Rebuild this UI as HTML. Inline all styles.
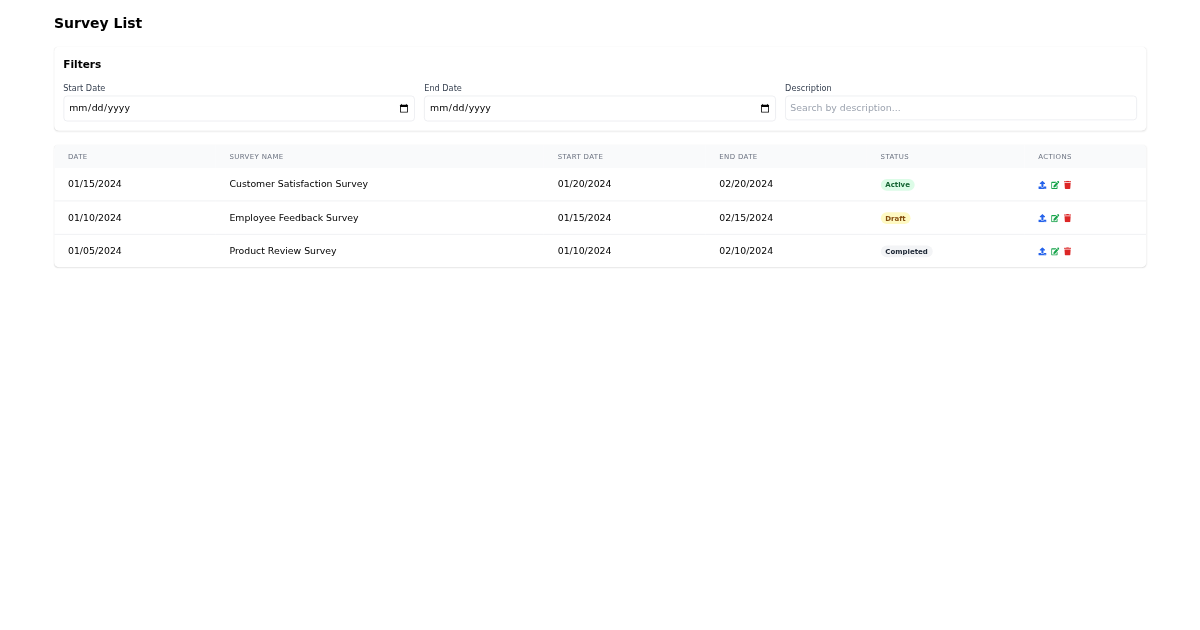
<!DOCTYPE html>
<html lang="en">
<head>
<meta charset="utf-8">
<title>Survey List</title>
<style>
*,*::before,*::after{box-sizing:border-box;margin:0;padding:0;border:0 solid #e5e7eb}
html,body{width:1200px;height:630px;overflow:hidden;background:#fff}
body{font-family:"DejaVu Sans","Liberation Sans",sans-serif;font-size:16px;line-height:24px;color:#000;-webkit-text-size-adjust:100%}
#layer{position:absolute;left:0;top:0;width:1200px;height:630px;will-change:transform}
#stage{position:absolute;left:0;top:0;width:2057.143px;height:1080px;transform:scale(0.5833333);transform-origin:0 0}
.wrap{padding:24px 92.57px 0 92.57px}
h1{font-size:24px;line-height:32px;font-weight:700;margin-bottom:24px}
.card{background:#fff;border-radius:8px;box-shadow:0 1px 3px 0 rgba(0,0,0,.07),0 1px 2px -1px rgba(0,0,0,.07)}
.filters{padding:16px;margin-bottom:24px}
h2{font-size:18px;line-height:28px;font-weight:700;margin-bottom:16px}
.grid{display:grid;grid-template-columns:repeat(3,minmax(0,1fr));gap:16px}
label{display:block;font-size:14px;line-height:20px;color:#374151;margin-bottom:4px;position:relative;top:1px}
.inp{position:relative;width:100%;border:1px solid #e1e4e8;border-radius:6px;white-space:nowrap}
.date{height:44px;padding:9px 8px}
.date span{padding:0 1px}
.date svg{position:absolute;right:11px;top:13px;width:14px;height:15px;transform:scale(1.08);transform-origin:5% 45%}
.text{height:42px;padding:8px;color:#9ca3af}
.tablecard{overflow:hidden}
table{width:100%;border-collapse:collapse;table-layout:fixed;text-indent:0}
thead{background:#f9fafb}
th{padding:12px 24px;text-align:left;font-size:12px;line-height:16px;font-weight:400;color:#6b7280;text-transform:uppercase;letter-spacing:.05em}
td{padding:16px 24px;white-space:nowrap}
tbody tr+tr{border-top:1px solid #e5e7eb}
.badge{display:inline-flex;padding:0 8px;font-size:12px;line-height:20px;font-weight:700;border-radius:9999px}
.g{background:#dcfce7;color:#166534}
.y{background:#fef9c3;color:#854d0e}
.n{background:#f3f4f6;color:#1f2937}
.acts{font-size:14px;line-height:20px}
.acts svg{display:inline-block;height:14px;vertical-align:-1.75px;margin-right:8px;fill:currentColor;position:relative;top:1.4px}
</style>
</head>
<body>
<div id="layer"><div id="stage">
<div class="wrap">
  <h1>Survey List</h1>

  <div class="card filters">
    <h2>Filters</h2>
    <div class="grid">
      <div>
        <label>Start Date</label>
        <div class="inp date"><span>mm</span>/<span>dd</span>/<span>yyyy</span><svg viewBox="0 0 14 15"><rect x="0.75" y="1.875" width="12.5" height="12.375" rx="0.9" fill="#000"/><rect x="2" y="5.5" width="10" height="7.625" fill="#fff"/><rect x="2.6" y="0.6" width="1.25" height="1.6" fill="#000"/><rect x="10.1" y="0.6" width="1.25" height="1.6" fill="#000"/></svg></div>
      </div>
      <div>
        <label>End Date</label>
        <div class="inp date"><span>mm</span>/<span>dd</span>/<span>yyyy</span><svg viewBox="0 0 14 15"><rect x="0.75" y="1.875" width="12.5" height="12.375" rx="0.9" fill="#000"/><rect x="2" y="5.5" width="10" height="7.625" fill="#fff"/><rect x="2.6" y="0.6" width="1.25" height="1.6" fill="#000"/><rect x="10.1" y="0.6" width="1.25" height="1.6" fill="#000"/></svg></div>
      </div>
      <div>
        <label>Description</label>
        <div class="inp text">Search by description...</div>
      </div>
    </div>
  </div>

  <div class="card tablecard">
    <table>
      <colgroup><col style="width:276.8px"><col style="width:562.7px"><col style="width:277px"><col style="width:276.6px"><col style="width:270.2px"><col></colgroup>
      <thead>
        <tr><th>Date</th><th>Survey Name</th><th>Start Date</th><th>End Date</th><th>Status</th><th>Actions</th></tr>
      </thead>
      <tbody>
        <tr>
          <td>01/15/2024</td><td>Customer Satisfaction Survey</td><td>01/20/2024</td><td>02/20/2024</td>
          <td><span class="badge g">Active</span></td>
          <td class="acts"><svg viewBox="0 0 512 512" width="14" style="color:#2563eb"><path d="M296 384h-80c-13.300 0-24-10.700-24-24V192h-87.700c-17.800 0-26.700-21.500-14.100-34.100L242.300 5.700c7.500-7.500 19.800-7.500 27.300 0l152.200 152.200c12.600 12.600 3.700 34.100-14.100 34.100H320v168c0 13.300-10.700 24-24 24zm216-8v112c0 13.300-10.700 24-24 24H24c-13.300 0-24-10.700-24-24V376c0-13.300 10.700-24 24-24h136v8c0 30.900 25.100 56 56 56h80c30.900 0 56-25.100 56-56v-8h136c13.300 0 24 10.700 24 24zm-124 88c0-11-9-20-20-20s-20 9-20 20 9 20 20 20 20-9 20-20zm64 0c0-11-9-20-20-20s-20 9-20 20 9 20 20 20 20-9 20-20z"/></svg><svg viewBox="0 0 576 512" width="14" preserveAspectRatio="none" style="color:#16a34a"><path d="M402.600 83.200l90.200 90.200c3.800 3.800 3.800 10 0 13.800L274.400 405.600l-92.800 10.300c-12.400 1.400-22.900-9.100-21.500-21.500l10.300-92.800L388.800 83.200c3.800-3.800 10-3.800 13.800 0zm162-22.900l-48.800-48.800c-15.200-15.200-39.900-15.200-55.200 0l-35.400 35.400c-3.800 3.800-3.800 10 0 13.800l90.200 90.200c3.800 3.800 10 3.800 13.800 0l35.400-35.400c15.200-15.300 15.200-40 0-55.200zM384 346.200V448H64V128h229.800c3.200 0 6.200-1.300 8.500-3.500l40-40c7.600-7.600 2.200-20.500-8.500-20.500H48C21.500 64 0 85.500 0 112v352c0 26.500 21.500 48 48 48h352c26.500 0 48-21.500 48-48V306.200c0-10.700-12.900-16-20.500-8.500l-40 40c-2.200 2.300-3.500 5.300-3.500 8.500z"/></svg><svg viewBox="0 0 448 512" width="12.25" style="color:#dc2626"><path d="M432 32H312l-9.400-18.700A24 24 0 0 0 281.100 0H166.800a23.720 23.720 0 0 0-21.400 13.300L136 32H16A16 16 0 0 0 0 48v32a16 16 0 0 0 16 16h416a16 16 0 0 0 16-16V48a16 16 0 0 0-16-16zM53.200 467a48 48 0 0 0 47.900 45h245.800a48 48 0 0 0 47.900-45L416 128H32z"/></svg></td>
        </tr>
        <tr>
          <td>01/10/2024</td><td>Employee Feedback Survey</td><td>01/15/2024</td><td>02/15/2024</td>
          <td><span class="badge y">Draft</span></td>
          <td class="acts"><svg viewBox="0 0 512 512" width="14" style="color:#2563eb"><path d="M296 384h-80c-13.300 0-24-10.700-24-24V192h-87.700c-17.800 0-26.700-21.500-14.100-34.100L242.300 5.700c7.500-7.500 19.800-7.500 27.300 0l152.200 152.200c12.600 12.600 3.700 34.100-14.100 34.100H320v168c0 13.300-10.700 24-24 24zm216-8v112c0 13.300-10.700 24-24 24H24c-13.300 0-24-10.700-24-24V376c0-13.300 10.700-24 24-24h136v8c0 30.900 25.100 56 56 56h80c30.900 0 56-25.100 56-56v-8h136c13.300 0 24 10.700 24 24zm-124 88c0-11-9-20-20-20s-20 9-20 20 9 20 20 20 20-9 20-20zm64 0c0-11-9-20-20-20s-20 9-20 20 9 20 20 20 20-9 20-20z"/></svg><svg viewBox="0 0 576 512" width="14" preserveAspectRatio="none" style="color:#16a34a"><path d="M402.600 83.200l90.200 90.200c3.800 3.800 3.800 10 0 13.800L274.400 405.600l-92.800 10.300c-12.400 1.400-22.900-9.100-21.500-21.500l10.300-92.800L388.800 83.200c3.800-3.800 10-3.800 13.800 0zm162-22.900l-48.800-48.800c-15.200-15.200-39.900-15.200-55.200 0l-35.400 35.400c-3.800 3.800-3.800 10 0 13.800l90.200 90.200c3.800 3.800 10 3.800 13.800 0l35.400-35.400c15.200-15.300 15.200-40 0-55.200zM384 346.200V448H64V128h229.800c3.200 0 6.200-1.300 8.500-3.500l40-40c7.600-7.600 2.200-20.500-8.500-20.500H48C21.500 64 0 85.500 0 112v352c0 26.500 21.500 48 48 48h352c26.500 0 48-21.500 48-48V306.200c0-10.700-12.900-16-20.500-8.500l-40 40c-2.200 2.300-3.500 5.300-3.500 8.500z"/></svg><svg viewBox="0 0 448 512" width="12.25" style="color:#dc2626"><path d="M432 32H312l-9.400-18.700A24 24 0 0 0 281.100 0H166.800a23.720 23.720 0 0 0-21.400 13.300L136 32H16A16 16 0 0 0 0 48v32a16 16 0 0 0 16 16h416a16 16 0 0 0 16-16V48a16 16 0 0 0-16-16zM53.200 467a48 48 0 0 0 47.900 45h245.800a48 48 0 0 0 47.900-45L416 128H32z"/></svg></td>
        </tr>
        <tr>
          <td>01/05/2024</td><td>Product Review Survey</td><td>01/10/2024</td><td>02/10/2024</td>
          <td><span class="badge n">Completed</span></td>
          <td class="acts"><svg viewBox="0 0 512 512" width="14" style="color:#2563eb"><path d="M296 384h-80c-13.300 0-24-10.700-24-24V192h-87.700c-17.800 0-26.700-21.500-14.100-34.100L242.300 5.700c7.500-7.500 19.800-7.500 27.300 0l152.200 152.200c12.600 12.600 3.700 34.100-14.100 34.100H320v168c0 13.300-10.700 24-24 24zm216-8v112c0 13.300-10.700 24-24 24H24c-13.300 0-24-10.700-24-24V376c0-13.300 10.700-24 24-24h136v8c0 30.900 25.100 56 56 56h80c30.900 0 56-25.100 56-56v-8h136c13.300 0 24 10.700 24 24zm-124 88c0-11-9-20-20-20s-20 9-20 20 9 20 20 20 20-9 20-20zm64 0c0-11-9-20-20-20s-20 9-20 20 9 20 20 20 20-9 20-20z"/></svg><svg viewBox="0 0 576 512" width="14" preserveAspectRatio="none" style="color:#16a34a"><path d="M402.600 83.200l90.200 90.200c3.800 3.800 3.800 10 0 13.800L274.400 405.600l-92.800 10.300c-12.400 1.400-22.900-9.100-21.500-21.500l10.300-92.800L388.800 83.200c3.800-3.800 10-3.800 13.800 0zm162-22.900l-48.800-48.800c-15.200-15.200-39.900-15.200-55.200 0l-35.400 35.400c-3.800 3.800-3.800 10 0 13.800l90.200 90.200c3.800 3.800 10 3.800 13.800 0l35.400-35.400c15.200-15.300 15.200-40 0-55.200zM384 346.200V448H64V128h229.800c3.200 0 6.200-1.300 8.500-3.500l40-40c7.600-7.600 2.200-20.500-8.500-20.500H48C21.500 64 0 85.500 0 112v352c0 26.500 21.500 48 48 48h352c26.500 0 48-21.500 48-48V306.200c0-10.700-12.900-16-20.500-8.500l-40 40c-2.200 2.300-3.500 5.300-3.500 8.500z"/></svg><svg viewBox="0 0 448 512" width="12.25" style="color:#dc2626"><path d="M432 32H312l-9.400-18.700A24 24 0 0 0 281.100 0H166.800a23.720 23.720 0 0 0-21.400 13.300L136 32H16A16 16 0 0 0 0 48v32a16 16 0 0 0 16 16h416a16 16 0 0 0 16-16V48a16 16 0 0 0-16-16zM53.200 467a48 48 0 0 0 47.900 45h245.800a48 48 0 0 0 47.900-45L416 128H32z"/></svg></td>
        </tr>
      </tbody>
    </table>
  </div>
</div>
</div></div>
</body>
</html>
